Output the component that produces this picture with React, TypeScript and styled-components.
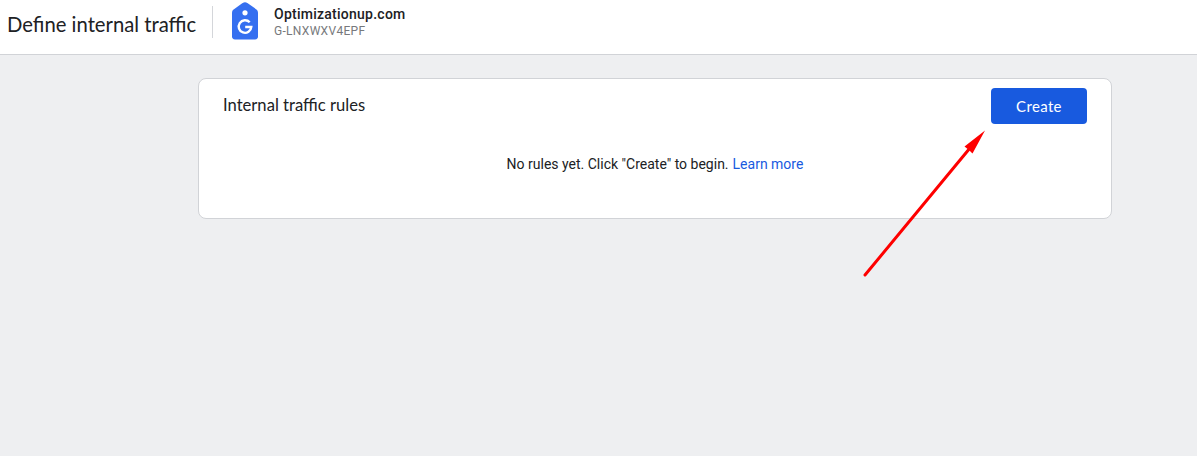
import React from 'react'
import styled, { createGlobalStyle } from 'styled-components'

const App = () => {
  return (
    <>
      <GlobalStyle />
      <Page>
        <Header>
          <PageTitle>Define internal traffic</PageTitle>
          <Divider />
          <TagIcon />
          <Property>
            <PropertyName>Optimizationup.com</PropertyName>
            <PropertyId>G-LNXWXV4EPF</PropertyId>
          </Property>
        </Header>
        <Content>
          <Card>
            <CardHeader>
              <CardTitle>Internal traffic rules</CardTitle>
              <CreateButton type='button'>Create</CreateButton>
            </CardHeader>
            <EmptyMessage>
              <span>No rules yet. Click "Create" to begin.</span>
              <LearnMore href='#'>Learn more</LearnMore>
            </EmptyMessage>
          </Card>
        </Content>
        <Arrow viewBox='0 0 130 152' aria-hidden='true'>
          <path d='M5 145 L110 18' stroke='#fe0000' strokeWidth='3' strokeLinecap='round' />
          <path d='M125 0.5 L112.5 23.5 L109.5 20.5 L104.5 16.5 Z' fill='#fe0000' />
        </Arrow>
      </Page>
    </>
  )
}

const TagIcon = () => (
  <TagSvg viewBox='0 0 26 38'>
    <path
      d='M10.6 1 Q13 -0.4 15.4 1 L24.4 7.4 Q26 8.6 26 10.4 V34.6 Q26 37.4 23 37.4 H3 Q0 37.4 0 34.6 V10.4 Q0 8.6 1.6 7.4 Z'
      fill='#356ff0'
    />
    <circle cx='13' cy='10.8' r='2.6' fill='#fff' />
    <path
      d='M17.7 20.3 A6.3 6.3 0 1 0 19.3 25 H13.2'
      fill='none'
      stroke='#fff'
      strokeWidth='2.4'
    />
  </TagSvg>
)

const GlobalStyle = createGlobalStyle`
  * {
    box-sizing: border-box;
  }
  body {
    margin: 0;
    background-color: #eeeff1;
    font-family: Roboto, "Liberation Sans", sans-serif;
    color: #202124;
  }
`;

const Page = styled.div`
  position: relative;
  height: 456px;
  overflow: hidden;
`;

const Header = styled.header`
  display: flex;
  align-items: flex-start;
  height: 55px;
  padding-left: 7px;
  background-color: #fff;
  border-bottom: 1px solid #d1d3d7;
`;

const PageTitle = styled.h1`
  width: 205px;
  margin: 0;
  padding-top: 10px;
  font: 400 20.25px/28px Lato, sans-serif;
  white-space: nowrap;
`;

const Divider = styled.div`
  width: 1px;
  height: 32px;
  margin-top: 6px;
  background-color: #d4d6da;
`;

const TagSvg = styled.svg`
  width: 26px;
  height: 38px;
  margin: 2px 16px 0 19px;
`;

const Property = styled.div`
  padding-top: 6px;
`;

const PropertyName = styled.div`
  font-size: 14px;
  font-weight: 500;
  line-height: 17px;
  letter-spacing: 0.25px;
`;

const PropertyId = styled.div`
  font-size: 12px;
  line-height: 17px;
  letter-spacing: 0.3px;
  color: #77797c;
`;

const Content = styled.main`
  padding: 23px 85px 0 198px;
`;

const Card = styled.section`
  height: 141px;
  padding: 9px 24px 0;
  background-color: #fff;
  border: 1px solid #d1d3d7;
  border-radius: 8px;
`;

const CardHeader = styled.div`
  display: flex;
  justify-content: space-between;
`;

const CardTitle = styled.h2`
  margin: 0;
  padding-top: 5px;
  font: 400 16.6px/24px Lato, sans-serif;
`;

const CreateButton = styled.button`
  width: 96px;
  height: 36px;
  padding: 0;
  border: 0;
  border-radius: 4px;
  background-color: #185adf;
  color: #fff;
  font: 400 15px/20px Lato, sans-serif;
  letter-spacing: 0.35px;
  cursor: pointer;
`;

const EmptyMessage = styled.div`
  display: flex;
  justify-content: center;
  gap: 4px;
  padding-top: 30px;
  font-size: 14px;
  line-height: 20px;
`;

const LearnMore = styled.a`
  color: #185adf;
  text-decoration: none;
`;

// annotation pointing at the button, lies over the card
const Arrow = styled.svg`
  position: absolute;
  left: 860px;
  top: 130px;
  width: 130px;
  height: 152px;
  pointer-events: none;
`;

export default App
